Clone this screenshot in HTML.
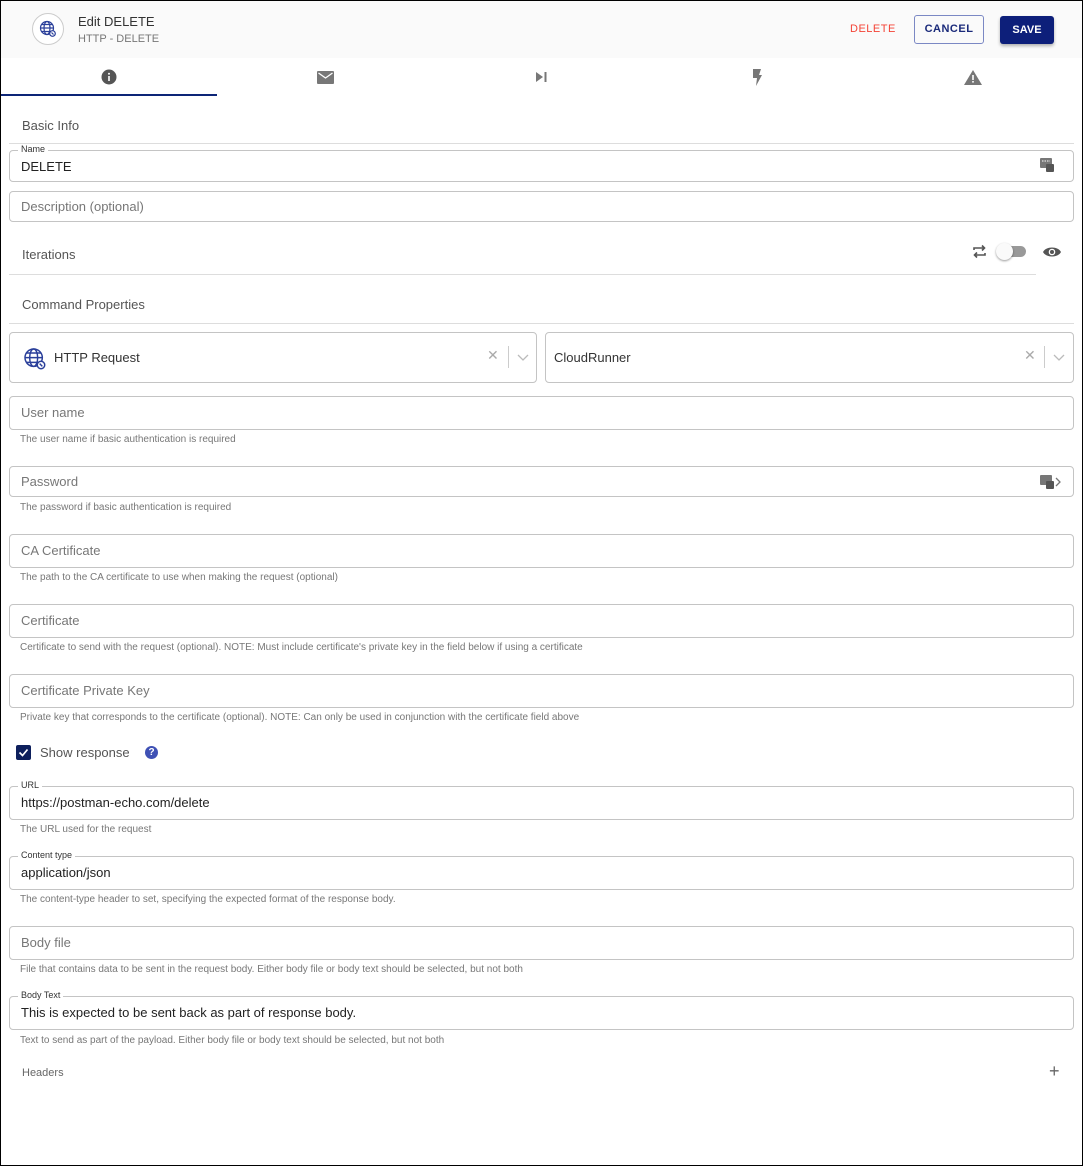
<!DOCTYPE html>
<html><head><meta charset="utf-8"><style>
*{box-sizing:border-box;margin:0;padding:0}
body{width:1083px;height:1166px;font-family:"Liberation Sans",sans-serif;background:#fff;position:relative;overflow:hidden}
.frame{position:absolute;left:0;top:0;width:1083px;height:1166px;border:1px solid #000;pointer-events:none;z-index:9}
.a{position:absolute}
.hdr{left:0;top:0;width:1083px;height:58px;background:#fafafa}
.f{position:absolute;left:9px;width:1065px;border:1px solid #c4c4c4;border-radius:4px;height:34px}
.f .v{position:absolute;left:11px;top:8px;font-size:13px;color:#222}
.f .p{position:absolute;left:11px;top:8px;font-size:13px;color:#777}
.f .lbl{position:absolute;left:8px;top:-7px;background:#fff;padding:0 3px;font-size:9px;color:#333}
.h{position:absolute;left:20px;font-size:10px;color:#777}
.sec{position:absolute;left:22px;font-size:13px;color:#555}
.line{position:absolute;height:1px;background:#ddd}
</style></head><body>
<div class="frame"></div>
<div class="a hdr"></div>
<div class="a" style="left:32px;top:13px;width:32px;height:32px;border:1px solid #ccc;border-radius:50%;background:#fff"></div>
<svg class="a" style="left:39px;top:20px" width="18" height="18" viewBox="0 0 18 18" fill="none" stroke="#2a3f9a" stroke-width="1.2"><circle cx="8" cy="8" r="6.5"/><ellipse cx="8" cy="8" rx="3" ry="6.5"/><path d="M1.5 8h13M2.5 4.5h11M2.5 11.5h11"/><circle cx="13.5" cy="13.5" r="2.8" fill="#fff"/><path d="M12.5 12.5l2 2"/></svg>
<div class="a" style="left:78px;top:14px;font-size:13px;color:#333">Edit DELETE</div>
<div class="a" style="left:78px;top:33px;font-size:11px;color:#777">HTTP - DELETE</div>
<div class="a" style="left:850px;top:23px;font-size:11px;color:#f44336;letter-spacing:.5px">DELETE</div>
<div class="a" style="left:914px;top:15px;width:70px;height:29px;border:1px solid #7b88c4;border-radius:3px;font-size:11px;color:#1a2a7a;text-align:center;line-height:27px;font-weight:bold;letter-spacing:.5px">CANCEL</div>
<div class="a" style="left:1000px;top:16px;width:54px;height:28px;background:#0d1f7a;border-radius:3px;font-size:11px;color:#fff;text-align:center;line-height:28px;font-weight:bold;box-shadow:0 2px 3px rgba(0,0,0,.3)">SAVE</div>
<svg class="a" style="left:101px;top:69px" width="16" height="16" viewBox="0 0 16 16"><circle cx="8" cy="8" r="7.5" fill="#555"/><rect x="7.2" y="7" width="1.6" height="5" fill="#fff"/><circle cx="8" cy="4.8" r="1" fill="#fff"/></svg>
<svg class="a" style="left:317px;top:71px" width="17" height="13" viewBox="0 0 17 13"><rect width="17" height="13" rx="1" fill="#777"/><path d="M1.5 2l7 5 7-5" stroke="#fff" stroke-width="1.3" fill="none"/></svg>
<svg class="a" style="left:536px;top:72px" width="11" height="10" viewBox="0 0 11 10"><path d="M0 0l7 5-7 5z" fill="#777"/><rect x="8.5" y="0" width="2" height="10" fill="#777"/></svg>
<svg class="a" style="left:752px;top:69px" width="10" height="17" viewBox="0 0 10 17"><path d="M1 0h8l-2 6h3l-6 11 1-8H1z" fill="#777"/></svg>
<svg class="a" style="left:964px;top:70px" width="18" height="15" viewBox="0 0 18 15"><path d="M9 0l9 15H0z" fill="#777"/><rect x="8.2" y="5" width="1.6" height="5" fill="#fff"/><rect x="8.2" y="11" width="1.6" height="1.6" fill="#fff"/></svg>
<div class="a" style="left:1px;top:94px;width:216px;height:2px;background:#0d2577"></div>
<div class="sec" style="top:118px">Basic Info</div>
<div class="line" style="left:9px;top:143px;width:1065px"></div>
<div class="f" style="top:150px;height:32px"><span class="lbl">Name</span><span class="v" style="top:8px">DELETE</span>
<svg class="a" style="left:1030px;top:7px" width="14" height="14" viewBox="0 0 14 14"><rect x="0" y="0" width="12" height="10" rx="1" fill="#777"/><rect x="6" y="6" width="8" height="8" rx="1" fill="#555"/><path d="M2 3h8" stroke="#fff" stroke-width="1" stroke-dasharray="1.5 1"/></svg></div>
<div class="f" style="top:191px;height:31px"><span class="p" style="top:7px">Description (optional)</span></div>
<div class="sec" style="top:247px">Iterations</div>
<svg class="a" style="left:972px;top:244px" width="15" height="15" viewBox="0 0 15 15" fill="none" stroke="#555" stroke-width="1.6"><path d="M2 6V4h10M10 1.5l2.5 2.5L10 6.5M13 9v2H3M5 13.5L2.5 11 5 8.5"/></svg>
<div class="a" style="left:999px;top:246px;width:27px;height:11px;border-radius:6px;background:#999"></div>
<div class="a" style="left:996px;top:243px;width:17px;height:17px;border-radius:50%;background:#fafafa;box-shadow:0 1px 2px rgba(0,0,0,.4)"></div>
<svg class="a" style="left:1043px;top:246px" width="18" height="12" viewBox="0 0 18 12"><path d="M0 6C3 0 15 0 18 6 15 12 3 12 0 6z" fill="#555"/><circle cx="9" cy="6" r="3.3" fill="#fff"/><circle cx="9" cy="6" r="2" fill="#555"/></svg>
<div class="line" style="left:9px;top:274px;width:1027px"></div>
<div class="sec" style="top:297px">Command Properties</div>
<div class="line" style="left:9px;top:323px;width:1065px"></div>
<div class="f" style="top:332px;width:528px;height:51px">
<svg class="a" style="left:13px;top:14px" width="24" height="24" viewBox="0 0 18 18" fill="none" stroke="#2a3f9a" stroke-width="1.1"><circle cx="8" cy="8" r="6.5"/><ellipse cx="8" cy="8" rx="3" ry="6.5"/><path d="M1.5 8h13M2.5 4.5h11M2.5 11.5h11"/><circle cx="13.5" cy="13.5" r="2.8" fill="#fff"/><path d="M12.5 12.5l2 2"/></svg>
<span class="v" style="left:44px;top:17px;color:#333">HTTP Request</span>
<span class="a" style="left:477px;top:14px;color:#aaa;font-size:14px">✕</span><span class="a" style="left:498px;top:13px;width:1px;height:22px;background:#ccc"></span>
<svg class="a" style="left:507px;top:21px" width="12" height="8" viewBox="0 0 12 8"><path d="M1 1l5 5 5-5" stroke="#bbb" stroke-width="1.3" fill="none"/></svg></div>
<div class="f" style="left:545px;top:332px;width:529px;height:51px"><span class="v" style="left:8px;top:17px;color:#333">CloudRunner</span>
<span class="a" style="left:478px;top:14px;color:#aaa;font-size:14px">✕</span><span class="a" style="left:498px;top:13px;width:1px;height:22px;background:#ccc"></span>
<svg class="a" style="left:507px;top:21px" width="12" height="8" viewBox="0 0 12 8"><path d="M1 1l5 5 5-5" stroke="#bbb" stroke-width="1.3" fill="none"/></svg></div>
<div class="f" style="top:396px"><span class="p">User name</span></div><div class="h" style="top:434px">The user name if basic authentication is required</div>
<div class="f" style="top:466px;height:31px"><span class="p" style="top:7px">Password</span>
<svg class="a" style="left:1030px;top:8px" width="22" height="14" viewBox="0 0 22 14"><rect x="0" y="0" width="12" height="10" rx="1" fill="#777"/><rect x="6" y="6" width="8" height="8" rx="1" fill="#555"/><path d="M16 3l4 4-4 4" stroke="#777" stroke-width="1.3" fill="none"/></svg></div>
<div class="h" style="top:502px">The password if basic authentication is required</div>
<div class="f" style="top:534px"><span class="p">CA Certificate</span></div><div class="h" style="top:572px">The path to the CA certificate to use when making the request (optional)</div>
<div class="f" style="top:604px"><span class="p">Certificate</span></div><div class="h" style="top:642px">Certificate to send with the request (optional). NOTE: Must include certificate's private key in the field below if using a certificate</div>
<div class="f" style="top:674px"><span class="p">Certificate Private Key</span></div><div class="h" style="top:712px">Private key that corresponds to the certificate (optional). NOTE: Can only be used in conjunction with the certificate field above</div>
<div class="a" style="left:16px;top:745px;width:15px;height:15px;background:#0d1f5c;border-radius:2px"></div>
<svg class="a" style="left:17px;top:746px" width="13" height="13" viewBox="0 0 13 13"><path d="M2.5 6.5l3 3 5-6" stroke="#fff" stroke-width="1.7" fill="none"/></svg>
<div class="a" style="left:40px;top:745px;font-size:13px;color:#555">Show response</div>
<div class="a" style="left:145px;top:746px;width:13px;height:13px;border-radius:50%;background:#3f51b5;color:#fff;font-size:10px;font-weight:bold;text-align:center;line-height:13px">?</div>
<div class="f" style="top:786px"><span class="lbl">URL</span><span class="v">https://postman-echo.com/delete</span></div><div class="h" style="top:824px">The URL used for the request</div>
<div class="f" style="top:856px"><span class="lbl">Content type</span><span class="v">application/json</span></div><div class="h" style="top:894px">The content-type header to set, specifying the expected format of the response body.</div>
<div class="f" style="top:926px"><span class="p">Body file</span></div><div class="h" style="top:964px">File that contains data to be sent in the request body. Either body file or body text should be selected, but not both</div>
<div class="f" style="top:996px"><span class="lbl">Body Text</span><span class="v">This is expected to be sent back as part of response body.</span></div><div class="h" style="top:1035px">Text to send as part of the payload. Either body file or body text should be selected, but not both</div>
<div class="a" style="left:22px;top:1067px;font-size:11px;color:#666">Headers</div>
<div class="a" style="left:1049px;top:1061px;font-size:18px;color:#666">+</div>
</body></html>
